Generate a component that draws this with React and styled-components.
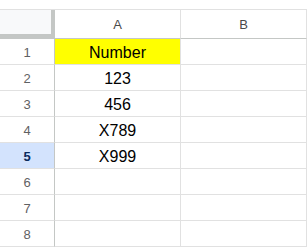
import React from 'react';
import styled, { createGlobalStyle } from 'styled-components';

const GlobalStyle = createGlobalStyle`
    html, body{
        margin: 0;
        padding: 0;
        background: #ffffff;
    }
    body{
        font-family: "Liberation Sans", Arial, sans-serif;
        overflow: hidden;
    }
`;

const Page = styled.div`
    width: 307px;
    height: 248px;
    padding-top: 9px;
    box-sizing: border-box;
    overflow: hidden;
`;

const Grid = styled.div`
    display: grid;
    grid-template-columns: 55px 126px 126px;
    grid-template-rows: 29px repeat(8, 26px);
    border-top: 1px solid #e1e1e1;
`;

const Corner = styled.div`
    background: #f8f9fa;
    border-right: 1px solid #c4c7c5;
    border-bottom: 1px solid #c4c7c5;
    box-shadow: inset -3px -4px 0 #c4c7c5;
`;

const ColHead = styled.div`
    display: flex;
    align-items: center;
    justify-content: center;
    padding-top: 1px;
    border-right: 1px solid #e1e1e1;
    border-bottom: 1px solid #c4c7c5;
    font-family: "Liberation Sans", Arial, sans-serif;
    font-size: 13px;
    color: #4a4a4a;
`;

const RowHead = styled.div`
    display: flex;
    align-items: center;
    justify-content: center;
    padding-top: 1px;
    border-right: 1px solid #c4c7c5;
    border-bottom: 1px solid #e1e1e1;
    font-family: "Liberation Sans", Arial, sans-serif;
    font-size: 13px;
    background: ${p => p.$active ? '#d3e3fd' : '#ffffff'};
    color: ${p => p.$active ? '#0a2a5c' : '#5f6163'};
    font-weight: ${p => p.$active ? 700 : 400};
`;

const Cell = styled.div`
    display: flex;
    align-items: center;
    justify-content: center;
    padding-top: 2px;
    border-right: 1px solid #e1e1e1;
    border-bottom: 1px solid #e1e1e1;
    font-size: 16px;
    color: #000000;
    background: ${p => p.$fill || 'transparent'};
`;

const rows = [
    { a: 'Number', fill: '#ffff00' },
    { a: '123' },
    { a: '456' },
    { a: 'X789' },
    { a: 'X999' },
    { a: '' },
    { a: '' },
    { a: '' },
];

const App = () => {
    return (
        <>
            <GlobalStyle />
            <Page>
                <Grid>
                    <Corner />
                    <ColHead>A</ColHead>
                    <ColHead>B</ColHead>
                    {rows.map((row, i) => (
                        <React.Fragment key={'row_' + i}>
                            <RowHead $active={i === 4}>{i + 1}</RowHead>
                            <Cell $fill={row.fill}>{row.a}</Cell>
                            <Cell />
                        </React.Fragment>
                    ))}
                </Grid>
            </Page>
        </>
    );
};

export default App;
